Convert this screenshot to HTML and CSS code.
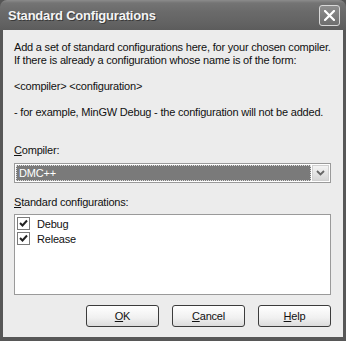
FILE: index.html
```html
<!DOCTYPE html>
<html lang="en">
<head>
    <meta charset="UTF-8">
    <title>Standard Configurations</title>
    <link rel="stylesheet" href="styles.css">
</head>
<body>
    <div class="window">
        <div class="titlebar">
            <span class="title">Standard Configurations</span>
            <button class="close-btn" aria-label="Close">
                <svg width="11" height="11" viewBox="0 0 11 11">
                    <path d="M1 1 L10 10 M10 1 L1 10" stroke="#fff" stroke-width="2.2" stroke-linecap="square"/>
                </svg>
            </button>
        </div>

        <div class="client">
            <p class="intro">Add a set of standard configurations here, for your chosen compiler.<br>If there is already a configuration whose name is of the form:</p>
            <p class="line">&lt;compiler&gt; &lt;configuration&gt;</p>
            <p class="line">- for example, MinGW Debug - the configuration will not be added.</p>

            <div class="field-label compiler-label"><u>C</u>ompiler:</div>
            <div class="combo">
                <div class="combo-value"><span>DMC++</span></div>
                <div class="combo-btn">
                    <svg width="9" height="6" viewBox="0 0 9 6">
                        <path d="M1 1 L4.5 4.5 L8 1" fill="none" stroke="#666" stroke-width="1.8"/>
                    </svg>
                </div>
            </div>

            <div class="field-label configs-label"><u>S</u>tandard configurations:</div>
            <ul class="check-list">
                <li>
                    <span class="check">
                        <svg width="9" height="9" viewBox="0 0 9 9"><path d="M1 4 L3.5 6.5 L8 1.5" fill="none" stroke="#222" stroke-width="2"/></svg>
                    </span>
                    Debug
                </li>
                <li>
                    <span class="check">
                        <svg width="9" height="9" viewBox="0 0 9 9"><path d="M1 4 L3.5 6.5 L8 1.5" fill="none" stroke="#222" stroke-width="2"/></svg>
                    </span>
                    Release
                </li>
            </ul>

            <div class="button-row">
                <button class="dlg-btn"><u>O</u>K</button>
                <button class="dlg-btn"><u>C</u>ancel</button>
                <button class="dlg-btn"><u>H</u>elp</button>
            </div>
        </div>
    </div>
</body>
</html>
```

FILE: styles.css
```css
body {
    margin: 0;
    padding: 0;
    background: #555;
    font-family: "Liberation Sans", Arial, sans-serif;
    font-size: 11px;
    letter-spacing: -0.2px;
    color: #111;
}
.window {
    width: 346px;
    height: 341px;
    background: #575757;
    border-radius: 7px 7px 0 0;
    display: flex;
    flex-direction: column;
    box-sizing: border-box;
}
.titlebar {
    height: 30px;
    display: flex;
    justify-content: space-between;
    align-items: center;
    padding: 0 6px 0 8px;
    border-radius: 7px 7px 0 0;
    background: linear-gradient(#8c8c8c 0px, #747474 3px, #6a6a6a 12px, #626262 24px, #5c5c5c 30px);
}
.title {
    color: #f4f4f4;
    font-weight: bold;
    font-size: 13px;
    text-shadow: 1px 1px 0 #3a3a3a;
    letter-spacing: -0.2px;
    margin-top: 1px;
}
.close-btn {
    width: 21px;
    height: 21px;
    padding: 0;
    border: 1px solid #d8d8d8;
    border-radius: 3px;
    background: linear-gradient(#8e8e8e, #6e6e6e);
    display: flex;
    justify-content: center;
    align-items: center;
}
.client {
    flex: 1;
    margin: 0 3px 4px 3px;
    background: #ececec;
    padding: 10px 12px 0 11px;
}
p {
    margin: 0;
    line-height: 13px;
    white-space: nowrap;
}
.intro {
    margin-top: 1px;
}
.line {
    margin-top: 13px;
}
.field-label {
    line-height: 13px;
}
.compiler-label {
    margin-top: 25px;
}
.combo {
    margin-top: 6px;
    height: 20px;
    border: 1px solid #9a9a9a;
    background: #fff;
    display: flex;
    box-sizing: border-box;
    padding: 1px;
}
.combo-value {
    flex: 1;
    background: #7a7a7a;
    color: #fff;
    border: 1px dotted #ddd;
    display: flex;
    align-items: center;
    padding-left: 2px;
    margin-right: 1px;
}
.combo-btn {
    width: 17px;
    background: linear-gradient(#f4f4f4, #d6d6d6);
    border: 1px solid #d0d0d0;
    box-sizing: border-box;
    display: flex;
    justify-content: center;
    align-items: center;
}
.configs-label {
    margin-top: 13px;
}
.check-list {
    list-style-type: none;
    margin: 5px 0 0 0;
    padding: 1px 2px;
    height: 81px;
    box-sizing: border-box;
    background: #fff;
    border: 1px solid #9a9a9a;
}
.check-list li {
    height: 15px;
    display: flex;
    align-items: center;
    gap: 7px;
}
.check {
    width: 13px;
    height: 13px;
    box-sizing: border-box;
    border: 1px solid #7a7a7a;
    background: #fff;
    display: flex;
    justify-content: center;
    align-items: center;
}
.button-row {
    display: flex;
    justify-content: flex-end;
    gap: 13px;
    margin-top: 10px;
}
.dlg-btn {
    width: 73px;
    height: 22px;
    padding: 0;
    font-family: "Liberation Sans", Arial, sans-serif;
    font-size: 11px;
    letter-spacing: -0.2px;
    color: #111;
    border: 1px solid #3c3c3c;
    border-radius: 3px;
    background: linear-gradient(#ffffff, #f0f0f0 60%, #dcdcdc);
}
```
